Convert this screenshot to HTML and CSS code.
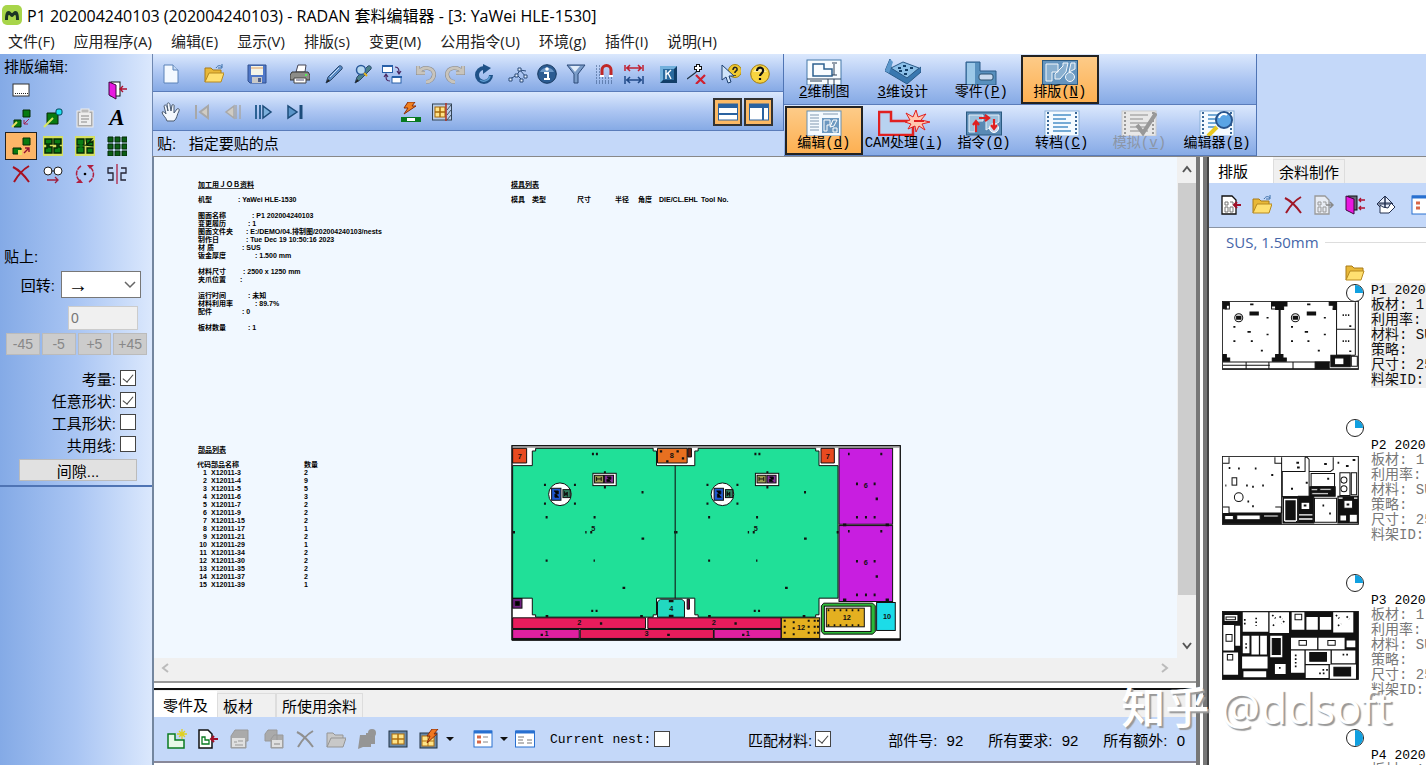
FILE: index.html
```html
<!DOCTYPE html>
<html lang="zh-CN">
<head>
  <meta charset="UTF-8">
  <title>P1 202004240103 (202004240103) - RADAN 套料编辑器 - [3: YaWei HLE-1530]</title>
  <link rel="stylesheet" href="styles.css">
</head>
<body>
  <header class="titlebar">
    <svg class="logo" viewBox="0 0 20 20"><rect width="20" height="20" rx="5" fill="#a8d54a"/><path d="M3 15c0-6 1-9 3.500-9 2 0 2.500 2 3.500 2s1.500-2 3.500-2c2.500 0 3.500 3 3.500 9h-3c0-3 0-5-1-5s-1.500 2-3 2-2-2-3-2-1 2-1 5z" fill="#1d3524"/></svg>
    <span>P1 202004240103 (202004240103) - RADAN 套料编辑器 - [3: YaWei HLE-1530]</span>
  </header>

  <nav class="menubar">
    <a href="#">文件(F)</a><a href="#">应用程序(A)</a><a href="#">编辑(E)</a><a href="#">显示(V)</a><a href="#">排版(s)</a><a href="#">变更(M)</a><a href="#">公用指令(U)</a><a href="#">环境(g)</a><a href="#">插件(I)</a><a href="#">说明(H)</a>
  </nav>

  <div class="main">
    <!-- left tool box -->
    <aside class="sidebar">
      <div class="toolbox">
        <div class="caption">排版编辑:</div>
        <div class="toolgrid">
          <button aria-label="Sheet"><svg viewBox="0 0 20 20"><rect x="2" y="4" width="16" height="12" fill="#fff" stroke="#333"/><path d="M4 13.500h13" stroke="#222" stroke-dasharray="1 1"/></svg></button>
          <span></span><span></span>
          <button aria-label="Exit"><svg viewBox="0 0 20 20"><rect x="4" y="2" width="9" height="14" fill="#fff" stroke="#111"/><path d="M2 2l7 3v14l-7-4z" fill="#e818e0" stroke="#400840"/><path d="M20 9h-7m3-3l-3 3 3 3" stroke="#b01030" stroke-width="1.400" fill="none"/></svg></button>

          <button aria-label="Move"><svg viewBox="0 0 20 20"><path d="M12 2h7v7h-7zM3 12h7v7h-7z" fill="#087a10" stroke="#052a05"/><path d="M1 19l5-5" stroke="#e8e060" stroke-width="2"/><path d="M18 11l-5 5m0-4v4h4" stroke="#a02050" fill="none"/></svg></button>
          <button aria-label="Place"><svg viewBox="0 0 20 20"><path d="M4 5h11v11h-11z" fill="#087a10" stroke="#052a05"/><path d="M1 19l9-9" stroke="#d8e860" stroke-width="2"/><rect x="13" y="1" width="6" height="6" rx="2" fill="#20e0f0" stroke="#045"/></svg></button>
          <button aria-label="Paste" disabled><svg viewBox="0 0 20 20"><rect x="2" y="3" width="16" height="16" fill="#aaa" stroke="#eee"/><rect x="4" y="5" width="12" height="12" fill="#eee"/><rect x="6" y="1" width="8" height="4" fill="#bbb" stroke="#eee"/><path d="M6 8h8M6 11h8M6 14h6" stroke="#888"/></svg></button>
          <button class="letter" aria-label="Text">A</button>

          <button class="on" aria-label="Stick"><svg viewBox="0 0 20 20"><path d="M12 2h7v7h-7zM2 12h8v6h-8z" fill="#087a10" stroke="#052a05"/><path d="M7 14h4v5h-4z" fill="#e8e060"/><path d="M13 17l5-5m-4 0h4v4" stroke="#901030" fill="none" stroke-width="1.400"/></svg></button>
          <button aria-label="Array"><svg viewBox="0 0 20 20"><rect x="0" y="0" width="20" height="20" fill="#d5e060"/><path d="M2 3h7v5h-3v3h3v6h-7v-5h2v-4h-2zM11 3h7v5h-2v3h2v6h-7v-5h3v-4h-3z" fill="#0a7d14" stroke="#052a05" stroke-width="1.500"/></svg></button>
          <button aria-label="Auto nest"><svg viewBox="0 0 20 20"><rect x="0" y="0" width="20" height="20" fill="#d5e060"/><path d="M2 3h7v6h-7zM11 3h6l-5 6zM2 11h7v6h-7zM12 12h6v5h-6zM11 9l7-4v5z" fill="#0a7d14" stroke="#052a05" stroke-width="1.300"/><circle cx="6" cy="10" r="2" fill="#0a7d14"/></svg></button>
          <button aria-label="Matrix"><svg viewBox="0 0 20 20"><path d="M1 1h5v5h-5zM8 1h5v5h-5zM15 1h5v5h-5zM1 8h5v5h-5zM8 8h5v5h-5zM15 8h5v5h-5zM1 15h5v5h-5zM8 15h5v5h-5zM15 15h5v5h-5z" fill="#0a5d14" stroke="#052a05"/></svg></button>

          <button aria-label="Delete"><svg viewBox="0 0 20 20"><path d="M2 3c6 3 11 8 16 15M18 2c-7 4-11 9-15 16" fill="none" stroke="#a81020" stroke-width="2"/></svg></button>
          <button aria-label="Link"><svg viewBox="0 0 20 20"><circle cx="5" cy="7" r="4" fill="#fff" stroke="#222"/><circle cx="15" cy="7" r="4" fill="#fff" stroke="#222"/><path d="M8 7h4" stroke="#222"/><path d="M4 16h11m-3-3l3 3-3 3" stroke="#a02040" stroke-width="1.300" fill="none"/></svg></button>
          <button aria-label="Rotate"><svg viewBox="0 0 20 20"><path d="M6 2a9 9 0 0 0-2 14M14 18a9 9 0 0 0 2-14" fill="none" stroke="#b02040" stroke-width="1.500" stroke-dasharray="5 1"/><path d="M12 1h7l-4 4zM8 19h-7l4-4z" fill="#b02040"/><circle cx="10" cy="10" r="1.300"/></svg></button>
          <button aria-label="Mirror"><svg viewBox="0 0 20 20"><path d="M6 4h-5v5h5v7h-5M14 4h5v5h-5v7h5" fill="none" stroke="#223" stroke-width="1.300"/><path d="M10 0v20" stroke="#b02040" stroke-width="1.300"/></svg></button>
        </div>

        <div class="caption paste">贴上:</div>
        <div class="field">
          <label for="rot">回转:</label>
          <span class="selectwrap">
            <select id="rot"><option>→</option></select>
            <svg viewBox="0 0 12 8"><path d="M1 1l5 5 5-5" fill="none" stroke="#666" stroke-width="1.500"/></svg>
          </span>
        </div>
        <input class="angle" type="text" value="0" aria-label="Angle" disabled>
        <div class="steps">
          <button disabled>-45</button><button disabled>-5</button><button disabled>+5</button><button disabled>+45</button>
        </div>
        <div class="checks">
          <label>考量:<input type="checkbox" checked></label>
          <label>任意形状:<input type="checkbox" checked></label>
          <label>工具形状:<input type="checkbox"></label>
          <label>共用线:<input type="checkbox"></label>
        </div>
        <button class="gapbtn">间隙...</button>
      </div>
    </aside>

    <div class="work">
      <div class="top">
        <div class="toolbars">
          <div class="toolbar">
            <button aria-label="New"><svg viewBox="0 0 20 20"><path d="M3 1h9l5 5v13h-14z" fill="#f4f9ff" stroke="#5b82b8"/><path d="M12 1v5h5" fill="#c5daf5" stroke="#5b82b8"/></svg></button>
            <button class="far" aria-label="Open"><svg viewBox="0 0 20 20"><path d="M1 18v-14h6l2 2h8v3" fill="#e8b838" stroke="#a87a18"/><path d="M1 18l4-9h15l-3 9z" fill="#ffe070" stroke="#b88a20"/><path d="M12 4c2-3 4-3 6-1m0-3v4h-4" fill="none" stroke="#3b6fa8"/></svg></button>
            <button class="far" aria-label="Save"><svg viewBox="0 0 20 20"><path d="M1 1h18v18h-16l-2-2z" fill="#5078c8" stroke="#30508f"/><rect x="4" y="2" width="12" height="9" fill="#f4f4e8"/><path d="M4 4h12" stroke="#e0a060"/><rect x="5" y="13" width="10" height="6" fill="#c8c8c8"/><rect x="11" y="14" width="3" height="4" fill="#50608a"/></svg></button>
            <button class="far" aria-label="Print"><svg viewBox="0 0 20 20"><path d="M6 8l2-7h8l-1 7z" fill="#fff" stroke="#445"/><path d="M2 8h16l2 3v5h-20v-5z" fill="#8c8c88" stroke="#333"/><path d="M4 14h12v5h-12z" fill="#fff" stroke="#444"/><path d="M6 16h8" stroke="#557"/><path d="M15 11h2" stroke="#5e5" stroke-width="2"/></svg></button>
            <button class="sep" aria-label="Pen"><svg viewBox="0 0 20 20"><path d="M2 19l2-6 11-11c2-1 4 1 3 3l-11 11z" fill="#5a8bc4" stroke="#2c4a70"/><path d="M6 13l9-9" stroke="#cfe2f8"/><path d="M2 19l2-4 2 2z" fill="#222"/></svg></button>
            <button aria-label="Edit pen"><svg viewBox="0 0 20 20"><path d="M2 19l2-6 11-11c2-1 4 1 3 3l-11 11z" fill="#4a8088" stroke="#2c4a70"/><circle cx="8" cy="6" r="4.500" fill="#b8d8f0" stroke="#2a5a9a" stroke-width="1.500"/><path d="M11 9l3 3" stroke="#e0b020" stroke-width="2"/><path d="M2 19l2-4 2 2z" fill="#222"/></svg></button>
            <button aria-label="Swap"><svg viewBox="0 0 20 20"><rect x="0.500" y="2.500" width="10" height="6" fill="#fff" stroke="#2860a8"/><path d="M0 2h11" stroke="#2860a8" stroke-width="2"/><rect x="10" y="13" width="9" height="6" fill="#fff" stroke="#2860a8"/><path d="M10 13h10" stroke="#2860a8" stroke-width="2"/><path d="M13 3c4 0 4 3 4 6m-2-2l2 3 2-3M8 17c-4 0-4-2-4-6m-2 2l2-3 2 3" fill="none" stroke="#4a2860" stroke-width="1.200"/></svg></button>
            <button class="sep" aria-label="Undo" disabled><svg viewBox="0 0 20 20"><path d="M2 2v7h7M3 8c4-6 14-5 15 2 0 5-4 8-8 8" fill="none" stroke="#888" stroke-width="4"/><path d="M2 2v7h7M3 8c4-6 14-5 15 2 0 5-4 8-8 8" fill="none" stroke="#c8c4bc" stroke-width="3"/></svg></button>
            <button aria-label="Redo" disabled><svg viewBox="0 0 20 20"><path d="M18 2v7h-7M17 8c-4-6-14-5-15 2 0 5 4 8 8 8" fill="none" stroke="#888" stroke-width="4"/><path d="M18 2v7h-7M17 8c-4-6-14-5-15 2 0 5 4 8 8 8" fill="none" stroke="#c8c4bc" stroke-width="3"/></svg></button>
            <button aria-label="Refresh"><svg viewBox="0 0 20 20"><path d="M17 11a7 7 0 1 1-7-7" fill="none" stroke="#1f5288" stroke-width="4"/><path d="M9 0l8 4-8 6z" fill="#1f5288"/><path d="M16 12a6.500 6.500 0 0 1-10 4" fill="none" stroke="#5a9ad0" stroke-width="1.500"/></svg></button>
            <button class="sep" aria-label="Polyline"><svg viewBox="0 0 20 20"><path d="M2 15l7-4 3-5 6 7M9 11l5 5M12 6l6 1" fill="none" stroke="#2a4a78"/><path d="M1 14h3v3h-3zM7 10h3v3h-3zM10 4h3v3h-3zM16 11h3v3h-3zM12 15h3v3h-3z" fill="#e8f2ff" stroke="#2a4a78"/></svg></button>
            <button aria-label="Info"><svg viewBox="0 0 20 20"><circle cx="10" cy="10" r="9.300" fill="#2c5c92" stroke="#16375e"/><path d="M3 8a8 8 0 0 1 14 0z" fill="#6c98c8"/><circle cx="10" cy="5" r="1.800" fill="#fff"/><path d="M7 9h4v6m-4 0h6" stroke="#fff" stroke-width="2" fill="none"/></svg></button>
            <button aria-label="Filter"><svg viewBox="0 0 20 20"><path d="M1 1h18l-7 9v9h-4v-9z" fill="#7a9cc8" stroke="#2c4a78"/><path d="M4 2h10l-5 6z" fill="#e0ecfa"/></svg></button>
            <button aria-label="Snap"><svg viewBox="0 0 20 20"><path d="M1 2h4M1 5h4M1 8h4M1 11h4M1 14h18M1 17h18M1 19h18" stroke="#2c4a78" stroke-dasharray="1 2"/><path d="M7 12v-6a4 4 0 0 1 9 0v6" fill="none" stroke="#c02828" stroke-width="3"/><path d="M5 12h4M14 12h4" stroke="#fff" stroke-width="2"/></svg></button>
            <button aria-label="Dimension"><svg viewBox="0 0 20 20"><path d="M1 1v6M19 1v6M2 4h16M6 1l-3 3 3 3M14 1l3 3-3 3" fill="none" stroke="#c02030" stroke-width="1.500"/><path d="M1 12v8M19 12v8M2 16h16M6 13l-3 3 3 3M14 13l3 3-3 3" fill="none" stroke="#204a88" stroke-width="1.500"/></svg></button>
            <button class="sep" aria-label="Key"><svg viewBox="0 0 20 20"><rect x="2" y="2" width="17" height="17" fill="#123e68"/><path d="M2 2h17l-3 3h-11v11l-3 3z" fill="#72b0dc"/><rect x="5" y="5" width="11" height="11" fill="#2a6a9e"/><path d="M8 6v9M13 6l-5 5M10 9l3 6" stroke="#fff" stroke-width="1.400"/></svg></button>
            <button aria-label="Remove point"><svg viewBox="0 0 20 20"><path d="M0 15l8-6 4-4" fill="none" stroke="#234" stroke-width="1.200"/><path d="M11 0v8M7 4h8" stroke="#111" stroke-width="4"/><path d="M11 1v6M8 4h6" stroke="#fff" stroke-width="2"/><path d="M9 11l9 9M18 11l-9 9" stroke="#d02030" stroke-width="2.200"/></svg></button>
            <button class="sep" aria-label="What is this"><svg viewBox="0 0 20 20"><circle cx="14" cy="7" r="6.500" fill="#f0c830" stroke="#a88410"/><path d="M12 6c0-4 5-3 4 0l-2 2v1M14 11v1" stroke="#222" fill="none" stroke-width="1.500"/><path d="M1 1v15l4-3 2 6 3-1-2-6h5z" fill="#cfe4fa" stroke="#1d4070"/></svg></button>
            <button aria-label="Help"><svg viewBox="0 0 20 20"><circle cx="10" cy="10" r="9.300" fill="#f7d440" stroke="#a07a10"/><path d="M3 8a8 8 0 0 1 14 0z" fill="#fdeb98"/><path d="M7 7c0-5 7-4 6 0 0 2-3 3-3 5M10 14v2" stroke="#111" fill="none" stroke-width="2.200"/></svg></button>
          </div>
          <div class="toolbar second">
            <button aria-label="Pan"><svg viewBox="0 0 20 20"><path d="M6 19c-1-4-5-6-5-9 2-1 3 1 4 2l-2-8c1-2 2-1 3 1l1 4-1-7c1-2 3-1 3 1l1 6 1-6c1-1 3 0 2 2v6l3-4c1-1 3 0 2 2-2 3-2 8-5 10z" fill="#f4f8fd" stroke="#4a5a70"/></svg></button>
            <button aria-label="First" disabled><svg viewBox="0 0 20 20"><path d="M4 3v14M16 4v12l-8-6z" fill="#d0ccc4" stroke="#a8a8a8" stroke-width="2"/></svg></button>
            <button aria-label="Previous" disabled><svg viewBox="0 0 20 20"><path d="M17 3v14M13 3v14M11 4v12l-8-6z" fill="#d0ccc4" stroke="#a8a8a8" stroke-width="1.500"/></svg></button>
            <button aria-label="Next"><svg viewBox="0 0 20 20"><path d="M2 3v14M6 3v14" stroke="#2c6294" stroke-width="2"/><path d="M9 4v12l8-6z" fill="#7cb0dc" stroke="#1c4c7a" stroke-width="1.500"/></svg></button>
            <button aria-label="Last"><svg viewBox="0 0 20 20"><path d="M16 3v14" stroke="#1c4c7a" stroke-width="3"/><path d="M3 4v12l9-6z" fill="#5a94c8" stroke="#1c4c7a" stroke-width="1.500"/></svg></button>
            <button class="group" aria-label="Run"><svg viewBox="0 0 20 20"><path d="M7 0h7l-3 4h4l-12 8 4-6h-4z" fill="#f08020" stroke="#8a2c08"/><path d="M0 15h20v5h-20z" fill="#087a20"/><path d="M6 16h8v3h-8z" fill="#fff"/></svg></button>
            <button aria-label="Sheet table"><svg viewBox="0 0 20 20"><rect x="0.500" y="2" width="19" height="16" fill="#b8cce8" stroke="#345"/><rect x="3" y="5" width="10" height="10" fill="#ffe488" stroke="#a86808"/><path d="M8 5v10M3 10h10" stroke="#a86808" stroke-width="1.500"/><path d="M14 1v18" stroke="#b03020" stroke-width="1.500"/><path d="M15 8l4-5M15 13l4-5M15 18l4-5" stroke="#456"/></svg></button>
            <button class="pane right" aria-label="Bottom pane"><svg viewBox="0 0 20 20"><rect x="0.500" y="2" width="19" height="16" fill="#fff" stroke="#2a62a0"/><path d="M1 4h18" stroke="#2a62a0" stroke-width="4"/><path d="M1 12h18" stroke="#2a62a0" stroke-width="2"/></svg></button>
            <button class="pane" aria-label="Side pane"><svg viewBox="0 0 20 20"><rect x="0.500" y="2" width="19" height="16" fill="#fff" stroke="#2a62a0"/><path d="M1 4h18" stroke="#2a62a0" stroke-width="4"/><path d="M14 4v14" stroke="#2a62a0" stroke-width="2"/></svg></button>
          </div>
          <div class="prompt">贴:&nbsp; &nbsp;指定要贴的点</div>
        </div>

        <div class="modes">
          <div class="moderow">
            <button><svg viewBox="0 0 36 26"><rect x="1" y="1" width="34" height="25" fill="#f8fcff" stroke="#4478a8"/><path d="M7 5h11v5h8v7h-19z" fill="none" stroke="#2c6090" stroke-width="1.500"/><path d="M26 4h5M28 5v11M26 16h5M1 20h34M22 20v6M28 20v6M4 22h12" stroke="#2c4058"/></svg><span><u>2</u>维制图</span></button>
            <button><svg viewBox="0 0 36 26"><path d="M5 0l-5 12 22 13 14-12v-5l-14 10-16-9z" fill="#3a78b0" stroke="#2a5a88"/><path d="M6 9l12-6 16 6-12 10z" fill="#8cc0e8" stroke="#2a5a88"/><path d="M5 0l-5 12 4 2 4-11z" fill="#5c98cc"/><path d="M13 9h3M18 7h3M14 12h3M20 11h3M19 15h3M25 9h3" stroke="#123e68" stroke-width="2"/></svg><span><u>3</u>维设计</span></button>
            <button><svg viewBox="0 0 36 26"><path d="M3 3h14v9h16v14h-30z" fill="#5890be" stroke="#2a5a88"/><path d="M4 4h8v21h-8z" fill="#9cc8e8"/><rect x="16" y="15" width="14" height="6" rx="2" fill="#c8daf0" stroke="#2a5070"/></svg><span>零件(<u>P</u>)</span></button>
            <button class="on"><svg viewBox="0 0 36 26"><rect x="0.500" y="1.500" width="35" height="24" fill="#6494be" stroke="#2c5a80"/><path d="M4 5h12v8h-6v9h-6zM13 15l8-8v-3h5l-2 9-6 7h-5zM29 4h4v6l-6 3z" fill="#8ab0d0" stroke="#f4f8fc"/><circle cx="28" cy="18" r="4.500" fill="#8ab0d0" stroke="#f4f8fc"/></svg><span>排版(<u>N</u>)</span></button>
          </div>
          <div class="moderow">
            <button class="on"><svg viewBox="0 0 36 26"><rect x="1" y="1" width="34" height="25" fill="#f4faff" stroke="#6890b0"/><path d="M4 5h9M4 8h9M4 11h9M4 14h9M4 17h9M4 20h9M17 4h15" stroke="#8098b0"/><rect x="16" y="8" width="17" height="15" fill="#6c98c0"/><path d="M18 10h6v5h-3v6h-3zM24 17l3-7h4l-3 6zM27 18h4v4h-4z" fill="none" stroke="#fff"/></svg><span>编辑(<u>d</u>)</span></button>
            <button><svg class="wide" viewBox="0 0 52 26"><path d="M1 2h12v9h22v14h-34z" fill="#b8d2f0" stroke="#e02020" stroke-width="2.500"/><path d="M52 12l-9-2 5-6-8 3-2-7-3 7-7-4 4 7-5 2 6 2-3 5 7-3 1 6 3-6 6 4-3-6z" fill="#ffc8b0" stroke="#e02020"/><path d="M36 11h10" stroke="#e02020" stroke-width="2"/></svg><span>CAM处理(<u>i</u>)</span></button>
            <button><svg viewBox="0 0 36 26"><rect x="0.500" y="2" width="35" height="23" fill="#5a8ab4" stroke="#2a5a80"/><path d="M3 5h14v6h-8v11h-6zM20 5h13v7l-13 8z" fill="#9cc0dc" stroke="#e8f0f8"/><circle cx="28" cy="18" r="4.500" fill="#c8daf0" stroke="#fff"/><path d="M10 22v-10m-3 3l3-4 3 4M13 8h9m-3-3l4 3-4 3M28 9v9m-3-3l3 4 3-4" fill="none" stroke="#e02020" stroke-width="2.200"/></svg><span>指令(<u>O</u>)</span></button>
            <button><svg viewBox="0 0 36 26"><rect x="1" y="1" width="34" height="25" fill="#f4faff" stroke="#8ab0d8"/><path d="M4 2v24M32 2v24" stroke="#3a6898" stroke-width="2" stroke-dasharray="2 2"/><path d="M9 5h18M9 9h13M9 13h18M9 17h15M9 21h18" stroke="#4a90c8" stroke-width="1.500"/></svg><span>转档(<u>C</u>)</span></button>
            <button disabled><svg viewBox="0 0 36 26"><rect x="1" y="1" width="34" height="25" fill="#e8e8e8" stroke="#ccc"/><path d="M4 2v24M32 2v24" stroke="#999" stroke-width="2" stroke-dasharray="2 2"/><path d="M9 5h18M9 9h13M9 13h18M9 17h15M9 21h18" stroke="#aaa" stroke-width="1.500"/><path d="M16 15l6 8 13-20" fill="none" stroke="#989898" stroke-width="4"/></svg><span>模拟(<u>v</u>)</span></button>
            <button><svg viewBox="0 0 36 26"><rect x="1" y="1" width="34" height="25" fill="#f4faff" stroke="#8ab0d8"/><path d="M4 2v24M32 2v24" stroke="#3a6898" stroke-width="2" stroke-dasharray="2 2"/><path d="M9 5h18M9 9h13M9 13h14M9 17h8" stroke="#4a90c8" stroke-width="1.500"/><circle cx="25" cy="10" r="8" fill="#5aa4e4" stroke="#28548c" stroke-width="2"/><path d="M20 8a5 5 0 0 1 8-3" stroke="#fff" stroke-width="2" fill="none"/><path d="M18 17l-9 9" stroke="#e8c820" stroke-width="4"/></svg><span>编辑器(<u>B</u>)</span></button>
          </div>
        </div>
      </div>

      <div class="bottom">
        <div class="center">
          <div class="viewport">
            <div class="canvas">
              <svg class="drawing" width="760" height="490" viewBox="155 157 760 490">
                <g class="small">
                  <text class="head" x="198" y="187">加工用ＪＯＢ资料</text>
                  <text x="198" y="202">机型</text><text x="238" y="202">: YaWei HLE-1530</text>
                  <text x="198" y="218">图面名称</text><text x="252" y="218">: P1 202004240103</text>
                  <text x="198" y="226">变更履历</text><text x="248" y="226">: 1</text>
                  <text x="198" y="234">图面文件夹</text><text x="246" y="234">: E:/DEMO/04.排制图/202004240103/nests</text>
                  <text x="198" y="242">制作日</text><text x="246" y="242">: Tue Dec 19 10:50:16 2023</text>
                  <text x="198" y="250">材 质</text><text x="242" y="250">: SUS</text>
                  <text x="198" y="258">钣金厚度</text><text x="255" y="258">: 1.500 mm</text>
                  <text x="198" y="274">材料尺寸</text><text x="243" y="274">: 2500 x 1250 mm</text>
                  <text x="198" y="282">夹爪位置</text><text x="240" y="282">:</text>
                  <text x="198" y="298">运行时间</text><text x="248" y="298">: 未知</text>
                  <text x="198" y="306">材料利用率</text><text x="255" y="306">: 89.7%</text>
                  <text x="198" y="314">配件</text><text x="242" y="314">: 0</text>
                  <text x="198" y="330">板材数量</text><text x="248" y="330">: 1</text>
                  <text class="head" x="511" y="187">模具列表</text>
                  <text x="511" y="202">模具</text><text x="532" y="202">类型</text><text x="577" y="202">尺寸</text><text x="615" y="202">半径</text><text x="638" y="202">角度</text><text x="659" y="202">DIE/CL.EHL</text><text x="701" y="202">Tool No.</text>
                  <text class="head" x="198" y="452">部品列表</text>
                </g>

                <!-- nested sheet, drawn at three units to the pixel -->
                <g class="sheet" transform="translate(500 435) scale(0.333)">
                  <rect x="36" y="32" width="1166" height="583" fill="#fff"/>
                  <path d="M38 36h1162" stroke="#999" stroke-width="5"/>
                  <g id="panel">
                    <path d="M38 92h59v-44h10v-8h353v8h10v44h57v398h-57v50h-10v7h-353v-7h-10v-50h-59z" fill="#20e098"/>
                    <path d="M276 57h6M288 57h6M312 112h6M312 157h6M132 150h6M222 150h6M132 206h6M222 206h6M425 172h6M137 247h6M281 247h6M39 292h6M256 292h4M271 292h6M523 292h6M425 311h8M137 377h6M281 377h4M368 459h8M274 528h6M287 528h6M137 544h8M421 544h8" stroke-width="7"/>
                    <rect x="279" y="115" width="70" height="37" fill="#fff"/><rect x="284" y="121" width="27" height="23" fill="#9a9a50"/><rect x="314" y="121" width="27" height="23" fill="#88309a"/>
                    <path d="M290 126v12m0-6h14m0-6v12M321 126h12v7h-12v7h12"/>
                    <circle cx="180" cy="178" r="34" fill="#fff"/><rect x="155" y="160" width="28" height="36" fill="#2058d0"/><rect x="189" y="164" width="22" height="24" fill="#308060"/>
                    <path d="M162 168h13v9h-10v10h12M194 169v14l8-12v14"/>
                    <text x="274" y="287">5</text>
                  </g>
                  <use href="#panel" x="488"/>
                  <path d="M38 40h42v44h-42zM964 40h40v44h-40z" fill="#e84a20"/>
                  <text x="53" y="72">7</text><text x="978" y="72">7</text>
                  <path d="M473 40h89v44h-89z" fill="#e87020"/><path d="M564 40h11v26h-11z" fill="#702010"/>
                  <path d="M480 49h7M530 49h7M499 79h7M546 70h7" stroke-width="7"/><text x="510" y="70">8</text>
                  <rect x="1018" y="40" width="161" height="228" fill="#c81ee0"/><rect x="1018" y="272" width="161" height="228" fill="#c81ee0"/>
                  <path d="M1045 57h5M1142 57h6M1069 147h6M1122 147h6M1128 192h7M1069 247h6M1096 247h6M1122 247h6M1030 270h10M1158 270h10M1045 289h5M1142 289h6M1069 379h6M1122 379h6M1128 425h7M1069 480h6M1096 480h6M1122 480h6M1030 495h10M1158 495h10" stroke-width="8"/>
                  <text x="1092" y="158">6</text><text x="1092" y="390">6</text>
                  <rect x="38" y="491" width="28" height="29" fill="#702080"/><path d="M46 500h12v12h-12z"/>
                  <path d="M473 547v-46l9-8h64l8 8v46z" fill="#22d8c0"/><path d="M507 499h14M507 543h14" stroke-width="7"/><text x="508" y="528">4</text>
                  <path d="M562 493h7v30h-7z" fill="#700040"/>
                  <path d="M38 549h399v32h-399zM444 549h400v32h-400zM241 584h400v27h-400z" fill="#e81c5c"/>
                  <path d="M38 584h200v27h-200zM643 584h201v27h-201z" fill="#e020a0"/>
                  <path d="M300 566h7M704 566h7M502 600h8M122 600h7M727 600h7" stroke-width="7"/>
                  <text x="232" y="572">2</text><text x="636" y="572">2</text><text x="134" y="605">1</text><text x="738" y="605">1</text><text x="434" y="605">3</text>
                  <rect x="845" y="549" width="115" height="62" fill="#e4b020"/>
                  <path d="M855 555v52M882 559v50M927 555v50M945 555v50M955 555v50" stroke-width="6" stroke-dasharray="6 12"/><text x="892" y="585">12</text>
                  <path d="M972 505h147l8 8v77l-8 8h-147l-7-8v-77z" fill="#2cb838"/><rect x="974" y="514" width="140" height="76" fill="#fff"/>
                  <rect x="980" y="520" width="114" height="56" fill="#e4b020"/><path d="M984 526h106M984 571h106" stroke-dasharray="5 13" stroke-width="6"/><text x="1029" y="556">12</text>
                  <rect x="1131" y="503" width="56" height="84" fill="#1cdce8"/><text x="1150" y="553">10</text>
                  <path d="M36 614h1166" stroke-width="7"/>
                  <rect x="36" y="32" width="1166" height="583" fill="none"/>
                </g>
              </svg>
              <table class="parts">
                <tr><th>代码</th><th>部品名称</th><th>数量</th></tr>
                <tr><td>1</td><td>X12011-3</td><td>2</td></tr>
                <tr><td>2</td><td>X12011-4</td><td>9</td></tr>
                <tr><td>3</td><td>X12011-5</td><td>5</td></tr>
                <tr><td>4</td><td>X12011-6</td><td>3</td></tr>
                <tr><td>5</td><td>X12011-7</td><td>2</td></tr>
                <tr><td>6</td><td>X12011-9</td><td>2</td></tr>
                <tr><td>7</td><td>X12011-15</td><td>2</td></tr>
                <tr><td>8</td><td>X12011-17</td><td>1</td></tr>
                <tr><td>9</td><td>X12011-21</td><td>2</td></tr>
                <tr><td>10</td><td>X12011-29</td><td>1</td></tr>
                <tr><td>11</td><td>X12011-34</td><td>2</td></tr>
                <tr><td>12</td><td>X12011-30</td><td>2</td></tr>
                <tr><td>13</td><td>X12011-35</td><td>2</td></tr>
                <tr><td>14</td><td>X12011-37</td><td>2</td></tr>
                <tr><td>15</td><td>X12011-39</td><td>1</td></tr>
              </table>
            </div>
            <div class="vscroll">
              <svg viewBox="0 0 12 8"><path d="M2 7l4-5 4 5" fill="none" stroke="#555" stroke-width="2"/></svg>
              <div class="thumb"></div>
              <svg viewBox="0 0 12 8"><path d="M2 1l4 5 4-5" fill="none" stroke="#555" stroke-width="2"/></svg>
            </div>
          </div>
          <div class="hscroll">
            <svg viewBox="0 0 8 12"><path d="M7 2l-5 4 5 4" fill="none" stroke="#bbb" stroke-width="2"/></svg>
            <svg viewBox="0 0 8 12"><path d="M1 2l5 4-5 4" fill="none" stroke="#bbb" stroke-width="2"/></svg>
          </div>

          <div class="partspane">
            <div class="tabs"><button class="active">零件及</button><button>板材</button><button>所使用余料</button></div>
            <div class="parttools">
              <button aria-label="New part"><svg viewBox="0 0 20 20"><path d="M1 5h7v6h9v8h-16z" fill="#e8f8e8" stroke="#0a7a20" stroke-width="1.500"/><path d="M15 0v10M10 5h10M12 2l6 6M18 2l-6 6" stroke="#e0d020" stroke-width="1.300"/></svg></button>
              <button aria-label="Import part"><svg viewBox="0 0 20 20"><path d="M1 1h9l4 4v14h-13z" fill="#fff" stroke="#111" stroke-width="1.500"/><path d="M4 8h3v3h4v4h-7z" fill="none" stroke="#0a7a20" stroke-width="1.300"/><path d="M20 10h-7m3-3l-3 3 3 3" fill="none" stroke="#a01028" stroke-width="2"/></svg></button>
              <button aria-label="Properties" disabled><svg viewBox="0 0 20 20"><path d="M2 7l4-6h13v11h-2v7h-15z" fill="#aaa" stroke="#999"/><path d="M3 9h13v9h-13z" fill="#e0e0e0"/><path d="M5 13h3M9 12h5M6 16h8" stroke="#999"/></svg></button>
              <button class="sep" aria-label="Copy" disabled><svg viewBox="0 0 20 20"><path d="M1 5l3-4h9v11h-12zM7 10l3-4h9v13h-12z" fill="#aaa" stroke="#999"/><path d="M8 11h10v7h-10z" fill="#e0e0e0"/><path d="M10 15h6" stroke="#888"/></svg></button>
              <button aria-label="Delete part" disabled><svg viewBox="0 0 20 20"><path d="M2 3c6 3 11 8 16 15M18 2c-7 4-11 9-15 16" fill="none" stroke="#909090" stroke-width="2"/></svg></button>
              <button aria-label="Open part" disabled><svg viewBox="0 0 20 20"><path d="M1 18v-14h6l2 2h8v3M1 18l4-9h15l-3 9z" fill="#c8c8c8" stroke="#959595"/></svg></button>
              <button aria-label="Mark" disabled><svg viewBox="0 0 20 20"><path d="M3 6h6v-2h9v11h-4v3h-8l-5 2z" fill="#959595"/><circle cx="15" cy="4" r="4" fill="#959595"/></svg></button>
              <button aria-label="Sheets"><svg viewBox="0 0 20 20"><rect x="1" y="2" width="18" height="16" fill="#6888a8" stroke="#234"/><rect x="4" y="5" width="12" height="10" fill="#ffe488" stroke="#b07010"/><path d="M10 5v10M4 10h12" stroke="#b07010" stroke-width="1.500"/></svg></button>
              <button aria-label="Nest now"><svg viewBox="0 0 20 20"><rect x="1" y="4" width="17" height="15" fill="#6888a8" stroke="#234"/><rect x="3" y="7" width="12" height="10" fill="#ffe488" stroke="#b07010"/><path d="M9 7v10M3 12h12" stroke="#b07010"/><path d="M13 0h6l-4 5h3l-10 9 3-7h-3z" fill="#f07820" stroke="#8a2c08"/></svg></button>
              <i class="caret"></i>
              <button class="gap" aria-label="List view"><svg viewBox="0 0 20 20"><rect x="1" y="2" width="18" height="16" fill="#fff" stroke="#2870d0"/><path d="M1 3h18" stroke="#2870d0" stroke-width="3"/><path d="M4 8h4M4 13h4" stroke="#d86848" stroke-width="3"/><path d="M10 8h5M10 13h5" stroke="#888"/></svg></button>
              <i class="caret"></i>
              <button aria-label="Columns"><svg viewBox="0 0 20 20"><rect x="0.500" y="2" width="19" height="16" fill="#fff" stroke="#2870d0"/><path d="M1 3h18" stroke="#2870d0" stroke-width="3"/><path d="M3 8h6M3 11h5M3 14h6M12 11h5M12 14h5" stroke="#777"/></svg></button>
              <label class="mono">Current nest:<input type="checkbox"></label>
              <label class="match">匹配材料:<input type="checkbox" checked></label>
              <span class="count">部件号: <b>92</b></span>
              <span class="count">所有要求: <b>92</b></span>
              <span class="count">所有额外: <b>0</b></span>
            </div>
            <div class="partlist"></div>
          </div>
        </div>

        <section class="nests">
          <div class="tabs"><button class="active">排版</button><button>余料制作</button></div>
          <div class="nesttools">
            <button aria-label="Import nest"><svg viewBox="0 0 20 20"><path d="M1 1h10l4 4v14h-14z" fill="#fff" stroke="#111" stroke-width="1.300"/><path d="M4 7h3v3h-3zM9 7h3v3M4 12h3v5h-3zM9 12h3v5h-3z" fill="none" stroke="#777"/><path d="M20 10h-7m3-3l-3 3 3 3" fill="none" stroke="#a01028" stroke-width="2"/></svg></button>
            <button aria-label="Open nest"><svg viewBox="0 0 20 20"><path d="M1 18v-14h6l2 2h8v3" fill="#e8b838" stroke="#a87a18"/><path d="M1 18l4-9h15l-3 9z" fill="#ffe070" stroke="#b88a20"/><path d="M12 4c2-3 4-3 6-1m0-3v4h-4" fill="none" stroke="#3b6fa8"/></svg></button>
            <button aria-label="Delete nest"><svg viewBox="0 0 20 20"><path d="M2 3c6 3 11 8 16 15M18 2c-7 4-11 9-15 16" fill="none" stroke="#a01828" stroke-width="2"/></svg></button>
            <button aria-label="Export nest" disabled><svg viewBox="0 0 20 20"><path d="M1 1h10l4 4v14h-14z" fill="#e8ecf4" stroke="#999" stroke-width="1.300"/><path d="M4 7h3v3h-3zM9 7h3v3M4 12h3v5h-3zM9 12h3v5h-3z" fill="none" stroke="#999"/><path d="M12 10h7m-3-3l3 3-3 3" fill="none" stroke="#888" stroke-width="1.500"/></svg></button>
            <button aria-label="Close nest"><svg viewBox="0 0 20 20"><rect x="3" y="1" width="9" height="14" fill="#667" stroke="#111"/><path d="M1 1l8 3v15l-8-4z" fill="#e818e0" stroke="#400840"/><path d="M20 5h-6m2-2l-2 2 2 2M20 13h-6m2-2l-2 2 2 2" stroke="#b01030" stroke-width="1.300" fill="none"/></svg></button>
            <button aria-label="View 3D"><svg viewBox="0 0 20 20"><path d="M9 1l8 8-8 8-8-8zM9 1v16M1 9h16" fill="#e8eefc" stroke="#223050"/><path d="M4 10v8h9l6-6-4-4-3 5-5-1z" fill="#fff" stroke="#223050"/><path d="M9 1v12M3 8h13" stroke="#223050"/></svg></button>
            <button class="sep" aria-label="View mode"><svg viewBox="0 0 20 20"><rect x="1" y="1" width="18" height="18" fill="#fff" stroke="#2870d0"/><path d="M1 2h18" stroke="#2870d0" stroke-width="3"/><path d="M5 8h4M5 13h4" stroke="#d86848" stroke-width="3"/></svg></button>
          </div>
          <div class="nestlist">
            <div class="material"><span>SUS, 1.50mm</span></div>

            <article class="nest current">
              <div class="preview">
                <div class="state">
                  <svg viewBox="0 0 20 20"><path d="M1 17v-14h6l2 2h9v3" fill="#e8b838" stroke="#a87a18"/><path d="M1 17l4-9h14l-3 9z" fill="#ffe070" stroke="#b88a20"/></svg>
                  <svg viewBox="0 0 20 20"><circle cx="10" cy="10" r="8.500" fill="#fff" stroke="#222"/><path d="M10 10v-8a8 8 0 0 1 8 8z" fill="#10a0e0"/></svg>
                </div>
                <svg class="plan" viewBox="0 0 409 206">
                  <rect x="1" y="1" width="406" height="203" fill="#fff"/>
                  <path d="M3 3h18v10h-8v10h-10zM148 3h46v12h-10v10h-24v-10h-12zM320 3h22v22h-10v-12h-12zM3 160h10v10h10v10h-20zM150 180v-10h10v-10h22v10h10v10zM325 162h58v34h-58zM278 182h42v20h-42z" fill="#111"/>
                  <path d="M8 24h14v-20M148 4v20h14M172 24v136M330 24h12M342 4v158M398 4v158M342 84h56M342 162h56M3 182h320M3 192h140M72 182v20M140 182v20M212 182v20M3 202h404"/>
                  <path d="M172 24v136" stroke-width="6"/>
                  <circle cx="50" cy="50" r="12"/><circle cx="219" cy="50" r="12"/><path d="M42 50h16M211 50h16M82 37h28M253 37h28" stroke-width="12"/>
                  <path d="M84 10h10M254 10h10M34 77h6M133 50h6M304 50h6M34 120h6M86 120h6M133 100h6M206 77h6M206 120h6M255 120h6M304 100h6M76 92h10M247 92h10M116 148h6M286 148h6M360 42h4M368 42h4M376 42h4M380 75h6M360 120h4M368 120h4M376 120h4M380 150h6" stroke-width="5"/>
                  <path d="M336 170h28v20h-28z" fill="#fff"/><path d="M386 165h18v30h-18z" fill="#fff"/>
                </svg>
              </div>
              <div class="info"><strong>P1 202004240103</strong>板材: 1<br>利用率: 89.7%<br>材料: SUS<br>策略:<br>尺寸: 2500 x 1250<br>料架ID:</div>
            </article>

            <article class="nest">
              <div class="preview">
                <div class="state"><svg viewBox="0 0 20 20"><circle cx="10" cy="10" r="8.500" fill="#fff" stroke="#222"/><path d="M10 10v-8a8 8 0 0 1 8 8z" fill="#10a0e0"/></svg></div>
                <svg class="plan" viewBox="0 0 409 206">
                  <rect x="1" y="1" width="406" height="203" fill="#fff"/>
                  <path d="M3 22h18v-18M158 4v18h20M3 152h18v18h156v-18h-18M178 4v166M248 4v42h-68v76h80v-76M248 4h6l6 6v36M332 4v36l-8 6M260 46h66M266 52h70v40h-70zM352 50h30v68h-30zM386 50h16v66h-16zM276 126h66v72h-66z"/>
                  <path d="M182 122h44v78h-44zM228 120h46v80h-46zM346 120h60v80h-60zM262 92h76v28h-76zM3 172h174v30h-174z" fill="#111"/>
                  <path d="M236 138h26v22h-26zM364 132h26v24h-26zM266 98h20v6h-20zM292 96h34v6h-34zM268 110h50v6h-50zM8 178h26v12h-26zM44 176h70v14h-70zM124 176h44v6h-44zM352 176h20v18h-20zM380 174h24v24h-24z" fill="#fff"/>
                  <path d="M187 128v66M222 128v66M187 130h34M187 194h34M230 176h40M230 188h40M348 126h12M394 126h10" stroke="#fff" stroke-width="4"/>
                  <circle cx="50" cy="123" r="13"/><rect x="30" y="65" width="14" height="22"/><circle cx="364" cy="72" r="9"/><circle cx="364" cy="98" r="9"/>
                  <path d="M20 36h5M48 37h5M98 37h5M147 57h6M72 88h5M90 92h5M120 88h5M76 136h5M10 88h3M90 150h5M222 20h8M224 34h8M305 24h8M345 20h5M370 30h8M390 12h8M206 98h6M250 80h6M314 68h6M244 148h8M372 145h8M300 148h5M320 172h5" stroke-width="6"/>
                </svg>
              </div>
              <div class="info"><strong>P2 202004240103</strong>板材: 1<br>利用率: 88.5%<br>材料: SUS<br>策略:<br>尺寸: 2500 x 1250<br>料架ID:</div>
            </article>

            <article class="nest">
              <div class="preview">
                <div class="state"><svg viewBox="0 0 20 20"><circle cx="10" cy="10" r="8.500" fill="#fff" stroke="#222"/><path d="M10 10v-8a8 8 0 0 1 8 8z" fill="#10a0e0"/></svg></div>
                <svg class="plan" viewBox="0 0 409 206">
                  <rect x="1" y="1" width="406" height="203" fill="#111"/>
                  <path d="M8 12h38v18h-38zM62 4h76v58h-76zM142 4h58v62h-58zM208 4h38v52h-38zM252 18h34v38h-34zM292 18h34v38h-34zM332 4h60v60h-60zM4 42h32v76h-32zM40 44h14v60h-14zM62 74h20v52h-20zM88 74h22v56h-22zM114 74h20v56h-20zM4 124h44v66h-44zM60 136h76v36h-76zM64 180h68v18h-68zM206 80h78v34h-78zM288 80h78v34h-78zM206 118h40v66h-40zM250 118h74v40h-74zM328 118h70v38h-70zM250 162h68v38h-68zM322 160h78v42h-78zM372 88h26v20h-26zM158 158h32v30h-32zM144 74h36v64h-36z" fill="#fff" stroke="none"/>
                  <path d="M150 82h24v48h-24zM262 124h50v26h-50zM334 168h50v26h-50z" fill="#111"/>
                  <path d="M12 18h28v8h-28zM12 70h18v20h-18zM16 130h16v16h-16zM230 88h22v14h-22zM316 88h22v14h-22zM218 10h20v16h-20z"/>
                  <path d="M68 24v22M102 20v24M150 12l10 10M172 16l8 8M186 30l-8 8M152 44l8-8M340 12l10 10M372 16l8 8M346 44l10-6M220 130v40M300 176h16M290 186h16M72 96v16M170 170h6M360 130h20" stroke-width="5" stroke-dasharray="5 6"/>
                </svg>
              </div>
              <div class="info"><strong>P3 202004240103</strong>板材: 1<br>利用率: 86.2%<br>材料: SUS<br>策略:<br>尺寸: 2500 x 1250<br>料架ID:</div>
            </article>

            <article class="nest">
              <div class="preview">
                <div class="state"><svg viewBox="0 0 20 20"><circle cx="10" cy="10" r="8.500" fill="#fff" stroke="#222"/><path d="M10 2a8 8 0 0 1 0 16z" fill="#10a0e0"/></svg></div>
              </div>
              <div class="info"><strong>P4 202004240103</strong>板材: 1</div>
            </article>
          </div>
        </section>
      </div>
    </div>
  </div>
  <div class="watermark">知乎 @ddsoft</div>
</body>
</html>
```
FILE: styles.css
```css
* {
  box-sizing: border-box;
}
body {
  margin: 0;
  height: 100vh;
  display: flex;
  flex-direction: column;
  overflow: hidden;
  background: #fff;
  color: #000;
  font-family: "Open Sans", "Noto Sans CJK SC", sans-serif;
  font-size: 15px;
}
button {
  padding: 0;
  border: 0;
  background: none;
  color: inherit;
  font: inherit;
}
svg {
  display: block;
}

/* title and menu */
.titlebar {
  display: flex;
  align-items: center;
  gap: 5px;
  height: 29px;
  padding-left: 2px;
  font-size: 16px;
  white-space: nowrap;
}
.logo {
  width: 20px;
  height: 20px;
}
.menubar {
  display: flex;
  align-items: center;
  gap: 19px;
  height: 25px;
  padding: 0 0 3px 8px;
}
.menubar a {
  color: #222;
  text-decoration: none;
  white-space: nowrap;
}

.main {
  flex: 1;
  display: flex;
  min-height: 0;
}

/* left tool box */
.sidebar {
  width: 152px;
  background: linear-gradient(to right, #84aae6, #a9c5f3 50%, #dbe8fd);
  font-family: "Liberation Sans", "Noto Sans CJK SC", sans-serif;
}
.toolbox {
  height: 433px;
  border-bottom: 2px solid #4f74b4;
}
.caption {
  height: 22px;
  padding: 2px 0 0 4px;
  line-height: 22px;
}
.toolgrid {
  display: grid;
  grid-template-columns: repeat(4, 32px);
  grid-auto-rows: 28px;
  padding-left: 5px;
}
.toolgrid button {
  display: flex;
  align-items: center;
  justify-content: center;
}
.toolgrid svg {
  width: 20px;
  height: 20px;
}
.toolgrid .on {
  border: 1px solid #222;
  background: #fdb668;
}
.toolgrid .letter {
  font-family: "Liberation Serif", serif;
  font-size: 23px;
  font-weight: bold;
  font-style: italic;
}
.paste {
  margin-top: 56px;
}
.field {
  display: flex;
  align-items: center;
  justify-content: flex-end;
  gap: 6px;
  margin-top: 5px;
  padding-right: 11px;
}
.selectwrap {
  position: relative;
}
.selectwrap select {
  display: block;
  appearance: none;
  width: 80px;
  height: 27px;
  padding: 0 6px;
  border: 1px solid #777;
  border-radius: 0;
  background: #fff;
  font: 20px "Liberation Sans", sans-serif;
}
.selectwrap svg {
  position: absolute;
  right: 5px;
  top: 10px;
  width: 12px;
  height: 8px;
}
.angle {
  display: block;
  width: 70px;
  height: 24px;
  margin: 8px 0 0 68px;
  padding: 0 2px;
  border: 1px solid #ccc;
  background: #f0f0f0;
  color: #777;
  font: 14px "Liberation Sans", sans-serif;
}
.steps {
  display: flex;
  gap: 2px;
  padding: 3px 5px 0 6px;
}
.steps button {
  flex: 1;
  height: 22px;
  border: 1px solid #bbb;
  background: #ccc;
  color: #888;
  font-size: 14px;
}
.checks {
  padding: 12px 16px 0 0;
}
.checks label {
  display: flex;
  align-items: center;
  justify-content: flex-end;
  gap: 4px;
  height: 22px;
}
input[type="checkbox"] {
  appearance: none;
  position: relative;
  width: 16px;
  height: 16px;
  margin: 0;
  border: 1px solid #444;
  background: #fff;
}
input[type="checkbox"]:checked::before {
  content: "";
  position: absolute;
  left: 4px;
  top: 1px;
  width: 5px;
  height: 9px;
  border: solid #444;
  border-width: 0 1px 1px 0;
  transform: rotate(40deg);
}
.gapbtn {
  display: block;
  width: 118px;
  height: 22px;
  margin: 4px 0 0 19px;
  border: 1px solid #bbb;
  background: #e1e1e1;
}

/* toolbars */
.work {
  flex: 1;
  display: flex;
  flex-direction: column;
  min-width: 0;
}
.top {
  display: flex;
  background: #c4d8f9;
  border-bottom: 1px solid #888;
}
.toolbars {
  width: 632px;
  border-left: 1px solid #6e87b0;
}
.toolbar {
  display: flex;
  align-items: center;
  gap: 7px;
  height: 38px;
  padding: 2px 10px 0 7px;
  border-right: 1px solid #4f74b4;
  border-bottom: 1px solid #5a7cba;
  background: linear-gradient(#dbe8fd, #adc6f2 50%, #86aae5);
}
.toolbar button {
  display: flex;
  align-items: center;
  justify-content: center;
  width: 22px;
  height: 22px;
}
.toolbar svg {
  width: 20px;
  height: 20px;
}
.toolbar .far {
  margin-left: 14px;
}
.toolbar .sep {
  margin-left: 5px;
}
.second {
  gap: 9px;
  height: 39px;
}
.second .group {
  margin-left: 85px;
}
.second .pane {
  width: 29px;
  height: 28px;
  margin-left: -7px;
  border: 2px solid #333;
  background: #fcb964;
}
.second .right {
  margin-left: auto;
}
.prompt {
  height: 25px;
  padding-left: 4px;
  line-height: 25px;
  font-family: "Liberation Sans", "Noto Sans CJK SC", sans-serif;
}
.modes {
  width: 473px;
  border-right: 1px solid #4f74b4;
}
.moderow {
  display: grid;
  grid-template-columns: repeat(6, 1fr);
  height: 51px;
  padding: 1px 0 0 1px;
  border-bottom: 1px solid #5a7cba;
  background: linear-gradient(#dbe8fd, #adc6f2 50%, #86aae5);
}
.moderow button {
  display: flex;
  flex-direction: column;
  align-items: center;
  padding-top: 2px;
  border: 2px solid transparent;
  white-space: nowrap;
  font: 14px/15px "Liberation Mono", "Noto Sans CJK SC", monospace;
}
.moderow .on {
  border-color: #222;
  background: linear-gradient(#fdcb88, #fdb052);
}
.moderow svg {
  width: 36px;
  height: 26px;
}
.moderow .wide {
  width: 52px;
}
.moderow button:disabled {
  color: #8b95a5;
}

/* drawing area */
.bottom {
  flex: 1;
  display: flex;
  min-height: 0;
}
.center {
  flex: 1;
  display: flex;
  flex-direction: column;
  min-width: 0;
  border-left: 2px solid #73869f;
  border-right: 11px double #777;
}
.viewport {
  flex: 1;
  display: flex;
  min-height: 0;
}
.canvas {
  position: relative;
  flex: 1;
  overflow: hidden;
  padding-left: 1px;
  background: #f1f8ff;
}
.small text {
  font: bold 7px "Liberation Sans", "Noto Sans CJK SC", sans-serif;
}
.small .head {
  text-decoration: underline;
}
.sheet {
  stroke: #111;
  stroke-width: 3;
}
.sheet text {
  fill: #111;
  stroke: none;
  font: bold 22px "Liberation Sans", sans-serif;
}
.parts {
  position: absolute;
  left: 43px;
  top: 304px;
  border-collapse: collapse;
  font: bold 7px/8px "Liberation Sans", "Noto Sans CJK SC", sans-serif;
}
.parts th,
.parts td {
  height: 8px;
  padding: 0;
  text-align: left;
}
.parts td:first-child {
  width: 14px;
  padding-right: 4px;
  text-align: right;
}
.parts td:nth-child(2) {
  width: 93px;
}
.vscroll {
  display: flex;
  flex-direction: column;
  align-items: center;
  justify-content: space-between;
  width: 19px;
  padding: 8px 0;
  background: #f0f0f0;
}
.vscroll svg {
  width: 12px;
  height: 8px;
}
.vscroll .thumb {
  width: 18px;
  height: 412px;
  margin-bottom: 38px;
  background: #cdcdcd;
}
.hscroll {
  display: flex;
  align-items: center;
  justify-content: space-between;
  height: 23px;
  padding: 0 27px 3px 7px;
  background: #f0f0f0;
}
.hscroll svg {
  width: 8px;
  height: 12px;
}

/* parts pane */
.partspane {
  border-top: 2px solid #999;
}
.tabs {
  display: flex;
  align-items: flex-end;
  height: 26px;
  background: #f0f0f0;
}
.tabs button {
  height: 24px;
  padding: 0 5px;
  border: 1px solid #ddd;
  border-bottom: 0;
  white-space: nowrap;
  line-height: 22px;
}
.tabs .active {
  height: 26px;
  padding: 0 8px;
  border-color: #fff;
  background: #fff;
}
.partspane .tabs {
  height: 29px;
  margin-top: 5px;
  border-top: 2px solid #111;
}
.partspane .tabs button:nth-child(2) {
  padding-right: 22px;
}
.nests .tabs .active {
  padding-right: 24px;
}
.parttools {
  display: flex;
  align-items: center;
  gap: 9px;
  height: 44px;
  padding: 0 11px 0 12px;
  background: #c4d8f9;
  white-space: nowrap;
  font-family: "Liberation Sans", "Noto Sans CJK SC", sans-serif;
}
.parttools button,
.nesttools button {
  display: flex;
  align-items: center;
  justify-content: center;
  width: 22px;
  height: 22px;
}
.parttools svg,
.nesttools svg {
  flex: none;
  width: 20px;
  height: 20px;
}
.parttools .sep,
.nesttools .sep {
  margin-left: 4px;
}
.parttools .gap {
  margin-left: 12px;
}
.caret {
  margin: 0 -3px;
  border: 4px solid transparent;
  border-top-color: #111;
  border-bottom: 0;
}
.parttools label {
  display: flex;
  align-items: center;
  gap: 3px;
}
.mono {
  margin-left: 5px;
  font: 13px "Liberation Mono", monospace;
}
.match {
  margin: 0 48px 0 auto;
}
.count {
  margin-right: 16px;
}
.count:last-child {
  margin-right: 0;
}
.count b {
  margin-left: 5px;
  font-weight: normal;
}
.partlist {
  height: 4px;
  border-top: 2px solid #889;
  background: #fff;
}

/* nest list */
.nests {
  width: 219px;
  overflow: hidden;
  border-left: 2px solid #444;
}
.nesttools {
  display: flex;
  align-items: center;
  gap: 9px;
  height: 45px;
  padding-left: 11px;
  border-bottom: 1px solid #8a94a4;
  background: #c4d8f9;
}
.nesttools button {
  flex: none;
}
.material {
  display: flex;
  align-items: center;
  gap: 6px;
  height: 28px;
  margin-bottom: 7px;
  padding-left: 17px;
  color: #4565a8;
}
.material::after {
  content: "";
  flex: 1;
  border-top: 1px solid #ddd;
}
.nestlist .nest {
  display: flex;
  gap: 5px;
  height: 155px;
  padding-left: 13px;
}
.preview {
  flex: none;
  width: 144px;
}
.state {
  height: 38px;
}
.state svg {
  width: 20px;
  height: 20px;
  margin-left: 123px;
}
.plan {
  width: 137px;
  height: 69px;
  fill: none;
  stroke: #111;
  stroke-width: 3;
}
.info {
  flex: none;
  width: 200px;
  height: 105px;
  margin-top: 20px;
  color: #777;
  white-space: nowrap;
  font: 14px/15px "Liberation Mono", "Noto Sans CJK SC", monospace;
}
.info strong {
  display: block;
  color: #000;
  font-size: 13px;
  font-weight: normal;
}
.current .info {
  background: #efefef;
  color: #111;
}

.watermark {
  position: absolute;
  right: 34px;
  bottom: 30px;
  color: #fff;
  font: 500 44px/56px "Open Sans", "Noto Sans CJK SC", sans-serif;
  text-shadow: 2px 2px 1px #999;
}
```
